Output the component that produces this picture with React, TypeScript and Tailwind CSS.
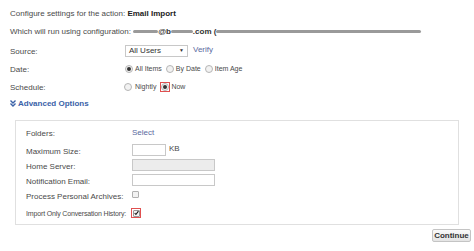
import React from "react";

function Radio({ checked }: { checked?: boolean }) {
  return (
    <span className="inline-flex h-[8px] w-[8px] items-center justify-center rounded-full border border-[#b5b5b5] bg-[#f2f2f2]">
      {checked && <span className="h-[4px] w-[4px] rounded-full bg-[#333]" />}
    </span>
  );
}

function Redact({ w }: { w: number }) {
  return (
    <span className="inline-block h-[3px] rounded-full bg-[#9a9a9a]" style={{ width: w }} />
  );
}

export default function App() {
  return (
    <div
      className="relative h-[251px] w-[474px] bg-white text-[8px] text-[#4a4a4a] whitespace-nowrap"
      style={{ fontFamily: '"Liberation Sans", Arial, sans-serif' }}
    >
      <div className="flex flex-col pl-[10px] pt-[8px]">
        <div className="flex h-[11px] items-center">
          <span>Configure settings for the action:&nbsp;</span>
          <span className="font-bold text-[#222]">Email Import</span>
        </div>
        <div className="mt-[7px] flex h-[11px] items-center">
          <span>Which will run using configuration:&nbsp;</span>
          <span className="flex items-center font-bold text-[#333]">
            <Redact w={25} />
            <span>@b</span>
            <Redact w={22} />
            <span>.com (</span>
            <Redact w={205} />
          </span>
        </div>
        <div className="mt-[8px] flex h-[12px] items-center">
          <span className="w-[115px] pt-[2px]">Source:</span>
          <div className="flex h-[12px] w-[63px] items-center justify-between border border-[#c8c8c8] bg-white px-[3px]">
            <span className="text-[#333]">All Users</span>
            <span className="text-[5px] text-[#333]">▼</span>
          </div>
          <span className="ml-[5px] -mt-[2px] text-[#5a6aa0]">Verify</span>
        </div>
        <div className="mt-[6px] flex h-[12px] items-center text-[7px]">
          <span className="w-[115px] pt-[2px] text-[8px]">Date:</span>
          <span className="flex items-center gap-[2px]">
            <Radio checked />
            <span>All Items</span>
          </span>
          <span className="ml-[4px] flex items-center gap-[2px]">
            <Radio />
            <span>By Date</span>
          </span>
          <span className="ml-[4px] flex items-center gap-[2px]">
            <Radio />
            <span>Item Age</span>
          </span>
        </div>
        <div className="mt-[6px] flex h-[12px] items-center text-[7px]">
          <span className="w-[114px] pt-[2px] text-[8px]">Schedule:</span>
          <span className="flex items-center gap-[3px]">
            <Radio />
            <span>Nightly</span>
          </span>
          <span className="ml-[4px] flex items-center">
            <span className="flex h-[10px] w-[10px] items-center justify-center border border-[#e05050]">
              <Radio checked />
            </span>
            <span className="ml-[1px]">Now</span>
          </span>
        </div>
        <div className="mt-[5px] flex h-[11px] items-center gap-[2px] font-bold text-[#3a62a8]">
          <svg width="6" height="7" viewBox="0 0 6 7">
            <path d="M0.5 0.5 L3 3 L5.5 0.5" fill="none" stroke="#3a62a8" strokeWidth="1.4" />
            <path d="M0.5 3.5 L3 6 L5.5 3.5" fill="none" stroke="#3a62a8" strokeWidth="1.4" />
          </svg>
          <span>Advanced Options</span>
        </div>
      </div>

      <div className="ml-[15px] mt-[11px] flex h-[105px] w-[444px] flex-col border border-[#e0e0e0] pl-[10px] pt-[8px]">
        <div className="flex h-[10px] items-center">
          <span className="w-[106px]">Folders:</span>
          <span className="-mt-[2px] text-[#5a6aa0]">Select</span>
        </div>
        <div className="mt-[5px] flex h-[12px] items-center">
          <span className="w-[106px] pt-[3px]">Maximum Size:</span>
          <span className="h-[12px] w-[34px] border border-[#c8c8c8] bg-white" />
          <span className="ml-[3px] -mt-[2px]">KB</span>
        </div>
        <div className="mt-[3px] flex h-[12px] items-center">
          <span className="w-[106px] pt-[3px]">Home Server:</span>
          <span className="h-[12px] w-[83px] border border-[#c8c8c8] bg-[#ececec]" />
        </div>
        <div className="mt-[3px] flex h-[12px] items-center">
          <span className="w-[106px] pt-[3px]">Notification Email:</span>
          <span className="h-[12px] w-[83px] border border-[#c8c8c8] bg-white" />
        </div>
        <div className="mt-[4px] flex h-[12px] items-center">
          <span className="w-[106px] pt-[2px]">Process Personal Archives:</span>
          <span className="-mt-[3px] h-[7px] w-[7px] rounded-[1px] border border-[#b0b0b0] bg-[#f2f2f2]" />
        </div>
        <div className="mt-[5px] flex h-[12px] items-center">
          <span className="w-[105px] shrink-0 pt-[2px] text-[7px] tracking-[-0.15px]">Import Only Conversation History:</span>
          <span className="flex h-[10px] w-[10px] shrink-0 items-center justify-center border border-[#e05050]">
            <span className="flex h-[7px] w-[7px] items-center justify-center rounded-[1px] border border-[#999] bg-[#f2f2f2]">
              <svg width="6" height="6" viewBox="0 0 6 6">
                <path d="M0.8 3 L2.3 4.8 L5.3 0.8" fill="none" stroke="#111" strokeWidth="1.3" />
              </svg>
            </span>
          </span>
        </div>
      </div>

      <div className="mt-[4px] flex justify-end pr-[3px]">
        <button className="flex h-[13px] w-[39px] items-center justify-center rounded-[2px] border border-[#c4c4c4] bg-gradient-to-b from-[#fafafa] to-[#e4e4e4] font-bold text-[#333]">
          Continue
        </button>
      </div>
    </div>
  );
}
